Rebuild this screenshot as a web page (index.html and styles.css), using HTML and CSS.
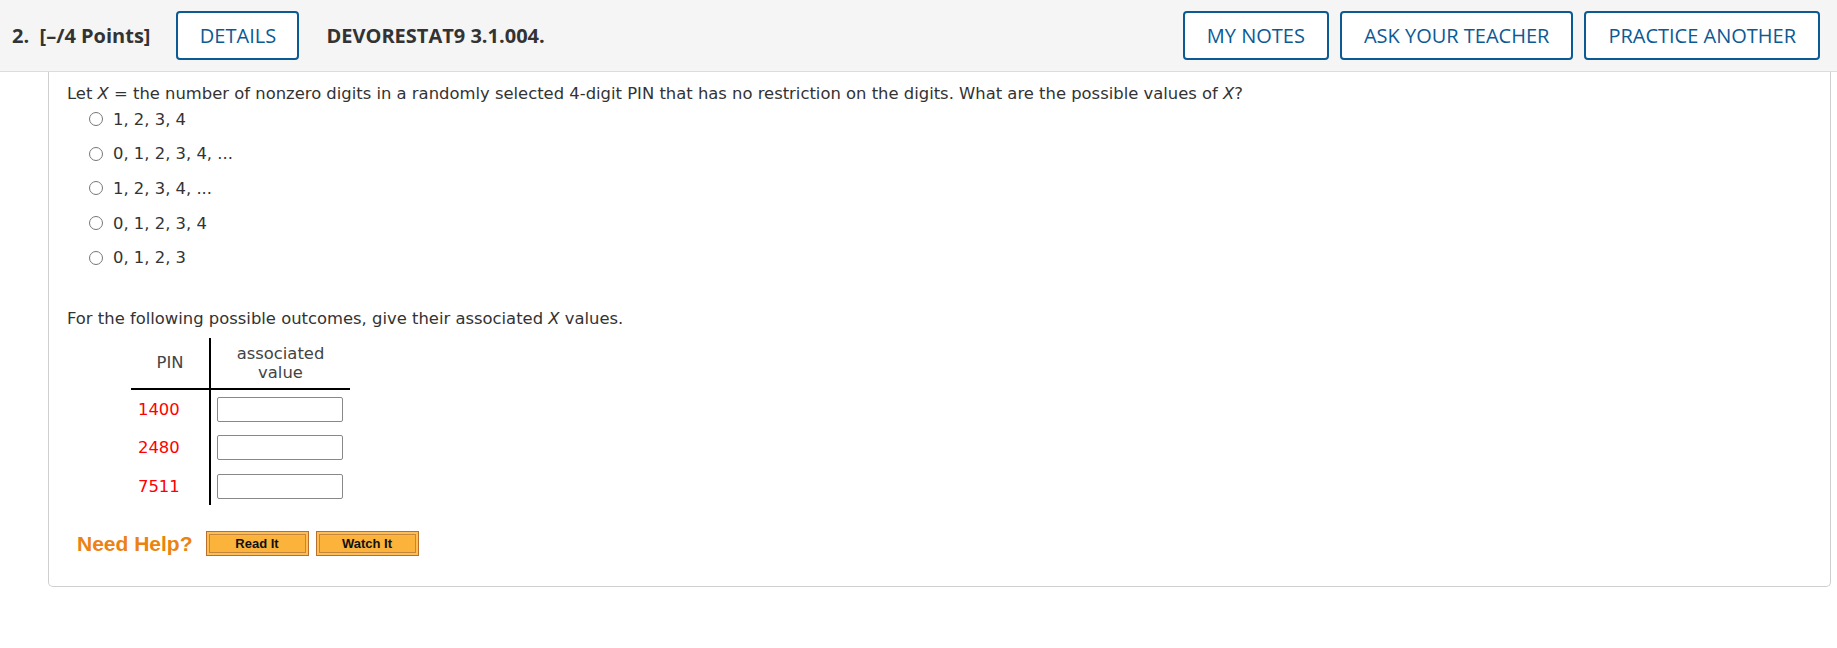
FILE: index.html
```html
<!DOCTYPE html>
<html lang="en">
<head>
  <meta charset="UTF-8">
  <title>DEVORESTAT9 3.1.004</title>
  <link rel="stylesheet" href="styles.css">
</head>
<body>
  <div class="q-header">
    <span class="q-title">2.&nbsp; [&ndash;/4 Points]</span>
    <button class="hdr-btn details">DETAILS</button>
    <span class="q-code">DEVORESTAT9 3.1.004.</span>
    <div class="hdr-right">
      <button class="hdr-btn">MY NOTES</button>
      <button class="hdr-btn">ASK YOUR TEACHER</button>
      <button class="hdr-btn">PRACTICE ANOTHER</button>
    </div>
  </div>

  <div class="q-body">
    <p class="q-text">Let <i>X</i> = the number of nonzero digits in a randomly selected 4-digit PIN that has no restriction on the digits. What are the possible values of <i>X</i>?</p>
    <ul class="choices">
      <li><span class="radio"></span>1, 2, 3, 4</li>
      <li><span class="radio"></span>0, 1, 2, 3, 4, ...</li>
      <li><span class="radio"></span>1, 2, 3, 4, ...</li>
      <li><span class="radio"></span>0, 1, 2, 3, 4</li>
      <li><span class="radio"></span>0, 1, 2, 3</li>
    </ul>

    <p class="q-text second">For the following possible outcomes, give their associated <i>X</i> values.</p>
    <table class="pin-table">
      <thead>
        <tr>
          <th class="col-pin">PIN</th>
          <th class="col-val">associated<br>value</th>
        </tr>
      </thead>
      <tbody>
        <tr><td class="pin">1400</td><td class="val"><input type="text"></td></tr>
        <tr><td class="pin">2480</td><td class="val"><input type="text"></td></tr>
        <tr><td class="pin">7511</td><td class="val"><input type="text"></td></tr>
      </tbody>
    </table>

    <div class="help">
      <span class="help-label">Need Help?</span>
      <button class="help-btn">Read It</button>
      <button class="help-btn">Watch It</button>
    </div>
  </div>
</body>
</html>
```

FILE: styles.css
```css
body {
  margin: 0;
  font-family: 'Open Sans', Arial, sans-serif;
  color: #333;
  background: #fff;
}

/* question header bar */
.q-header {
  display: flex;
  align-items: center;
  height: 72px;
  padding: 0 17px 0 12px;
  background: #f5f5f5;
  border-bottom: 1px solid #dcdcdc;
  box-sizing: border-box;
}
.q-title {
  font-weight: 700;
  font-size: 20px;
  color: #333;
}
.q-code {
  font-weight: 700;
  font-size: 20px;
  color: #333;
  margin-left: 27px;
}
.hdr-btn {
  font-family: 'Open Sans', Arial, sans-serif;
  font-size: 20px;
  color: #0b5a94;
  background: #fff;
  border: 2px solid #0b5a94;
  border-radius: 4px;
  height: 49px;
  padding: 0 22px;
  cursor: pointer;
}
.details {
  margin-left: 26px;
  width: 123px;
  padding: 0;
}
.hdr-right {
  margin-left: auto;
  display: flex;
  gap: 11px;
}

/* question body */
.q-body {
  margin: 0 6px 0 48px;
  border: 1px solid #cfcfcf;
  border-top: none;
  border-radius: 0 0 5px 5px;
  padding: 12px 18px 30px 18px;
  font-family: 'DejaVu Sans', Verdana, sans-serif;
  font-size: 16.4px;
  color: #333;
}
.q-text {
  margin: 0;
  line-height: 20px;
}
.q-text.second {
  margin-top: 34px;
}

.choices {
  list-style: none;
  margin: -2px 0 0 22px;
  padding: 0;
}
.choices li {
  display: flex;
  align-items: center;
  height: 34.6px;
}
.radio {
  width: 12px;
  height: 12px;
  border: 1px solid #777;
  border-radius: 50%;
  margin-right: 10px;
}

/* PIN table */
.pin-table {
  margin: 9px 0 0 64px;
  border-collapse: collapse;
}
.pin-table th {
  font-weight: normal;
  color: #444;
  line-height: 19px;
  height: 50px;
  border-bottom: 2px solid #000;
  padding: 0;
}
.col-pin {
  width: 78px;
  border-right: 2px solid #000;
}
.col-val {
  width: 139px;
}
.pin-table td {
  height: 38.5px;
  padding: 0;
}
.pin {
  color: #f00;
  padding-left: 7px !important;
  border-right: 2px solid #000;
}
.val {
  padding-left: 6px !important;
}
.val input {
  width: 126px;
  height: 25px;
  box-sizing: border-box;
  border: 1px solid #888;
  border-radius: 2px;
  display: block;
}

/* help row */
.help {
  display: flex;
  align-items: center;
  margin-top: 26px;
  margin-left: 10px;
}
.help-label {
  font-family: 'Liberation Sans', Arial, sans-serif;
  font-weight: 700;
  font-size: 21px;
  color: #ec820f;
  margin-right: 13px;
}
.help-btn {
  font-family: 'Liberation Sans', Arial, sans-serif;
  font-weight: 700;
  font-size: 13px;
  color: #111;
  width: 103px;
  height: 25px;
  padding: 0;
  margin-right: 7px;
  background: linear-gradient(#fdd07a 0, #fbb33c 4px, #fbb33c 100%);
  border: 1px solid #b8702a;
  box-shadow: inset 0 0 0 2px #fdbf55, inset 0 0 0 3px #c4863c;
  cursor: pointer;
}
```
